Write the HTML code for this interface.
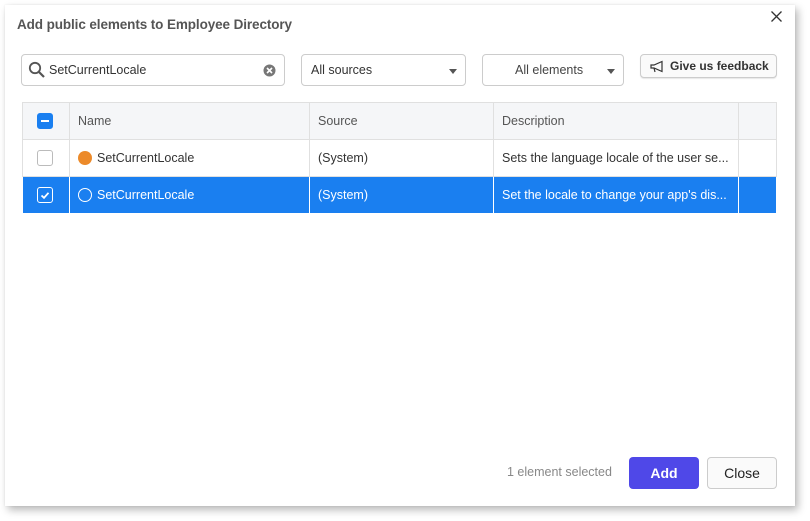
<!DOCTYPE html>
<html><head><meta charset="utf-8"><style>
*{box-sizing:border-box;margin:0;padding:0}
body{width:810px;height:521px;background:#fff;font-family:"Liberation Sans",sans-serif;position:relative;overflow:hidden;color:#333}
.dlg{position:absolute;left:5px;top:5px;width:790px;height:501px;background:#fff;box-shadow:3px 4px 8px rgba(0,0,0,.28),0 0 2px rgba(0,0,0,.08)}
.abs{position:absolute}
.title{left:12px;top:12px;font-size:13.5px;color:#555;font-weight:bold;letter-spacing:-0.1px}
.box{border:1px solid #ccc;border-radius:4px;background:#fff}
table{position:absolute;left:22px;top:102px;width:755px;border-collapse:collapse;font-size:12.5px}
td{border:1px solid #e0e0e0;height:37px;padding:0 8px;white-space:nowrap;overflow:hidden}
tr.h td{background:#f5f6f8;color:#555}
tr.s td{background:#1a7ff0;color:#fff;border-color:#fff}
.cb{width:16px;height:16px;border:1px solid #bbb;border-radius:3px;display:inline-block;vertical-align:middle;margin-left:6px;position:relative;background:#fff}
.dot{width:14px;height:14px;border-radius:50%;display:inline-block;vertical-align:middle;margin-right:5px}
.arrow{width:0;height:0;border-left:4px solid transparent;border-right:4px solid transparent;border-top:5px solid #555}
</style></head><body>
<div class="dlg">
<div class="abs title">Add public elements to Employee Directory</div>
<svg class="abs" style="left:766px;top:6px" width="11" height="11" viewBox="0 0 11 11"><path d="M0.5 0.5L10.5 10.5M10.5 0.5L0.5 10.5" stroke="#333" stroke-width="1.3"/></svg>
<div class="abs box" style="left:16px;top:49px;width:264px;height:32px">
 <svg class="abs" style="left:6px;top:6px" width="18" height="18" viewBox="0 0 18 18"><circle cx="7" cy="7" r="5.2" fill="none" stroke="#555" stroke-width="1.8"/><line x1="11" y1="11" x2="16" y2="16" stroke="#555" stroke-width="2.2"/></svg>
 <div class="abs" style="left:27px;top:8px;font-size:12.5px;color:#333">SetCurrentLocale</div>
 <svg class="abs" style="left:241px;top:9px" width="13" height="13" viewBox="0 0 13 13"><circle cx="6.5" cy="6.5" r="6" fill="#777"/><path d="M4 4L9 9M9 4L4 9" stroke="#fff" stroke-width="1.6"/></svg>
</div>
<div class="abs box" style="left:296px;top:49px;width:165px;height:32px">
 <div class="abs" style="left:9px;top:8px;font-size:12.5px;color:#333">All sources</div>
 <div class="abs arrow" style="left:147px;top:14px"></div>
</div>
<div class="abs box" style="left:477px;top:49px;width:142px;height:32px">
 <div class="abs" style="left:32px;top:8px;font-size:12.5px;color:#444">All elements</div>
 <div class="abs arrow" style="left:124px;top:14px"></div>
</div>
<div class="abs box" style="left:635px;top:49px;width:137px;height:24px;background:#fafafa;box-shadow:0 1px 1px rgba(0,0,0,.1)">
 <svg class="abs" style="left:9px;top:5px" width="16" height="13" viewBox="0 0 16 13"><path d="M1 5h3l8-3.5v10L4 8H1z M4 8l1 4" fill="none" stroke="#333" stroke-width="1.2"/></svg>
 <div class="abs" style="left:29px;top:4px;font-size:12px;font-weight:bold;color:#333">Give us feedback</div>
</div>
</div>
<table>
<tr class="h"><td style="width:47px;padding:0"><span class="cb" style="background:#1a7ff0;border-color:#1a7ff0;margin-left:14px"><span class="abs" style="left:3px;top:6px;width:8px;height:2px;background:#fff"></span></span></td><td style="width:240px">Name</td><td style="width:184px">Source</td><td style="width:245px">Description</td><td></td></tr>
<tr><td style="padding:0"><span class="cb" style="margin-left:14px"></span></td><td><span class="dot" style="background:#ec8a2a"></span>SetCurrentLocale</td><td>(System)</td><td>Sets the language locale of the user se...</td><td></td></tr>
<tr class="s"><td style="padding:0"><span class="cb" style="margin-left:14px;border-color:#fff;background:#1a7ff0;box-shadow:inset 0 0 0 1px #1a7ff0"><svg class="abs" style="left:1px;top:1px" width="12" height="12" viewBox="0 0 12 12"><rect x="0" y="0" width="12" height="12" rx="2" fill="#1a7ff0"/><path d="M2.5 6.5l2.5 2.3 4.5-5" fill="none" stroke="#fff" stroke-width="1.8"/></svg></span></td><td><span class="dot" style="border:1.3px solid #fff"></span>SetCurrentLocale</td><td>(System)</td><td>Set the locale to change your app's dis...</td><td></td></tr>
</table>
<div class="abs" style="left:507px;top:465px;font-size:12.5px;color:#888">1 element selected</div>
<div class="abs" style="left:629px;top:457px;width:70px;height:32px;background:#4f48e8;border-radius:4px;color:#fff;font-weight:bold;font-size:14px;text-align:center;line-height:32px">Add</div>
<div class="abs" style="left:707px;top:457px;width:70px;height:32px;background:#fafafa;border:1px solid #ccc;border-radius:4px;color:#222;font-size:14px;text-align:center;line-height:30px">Close</div>
</body></html>
